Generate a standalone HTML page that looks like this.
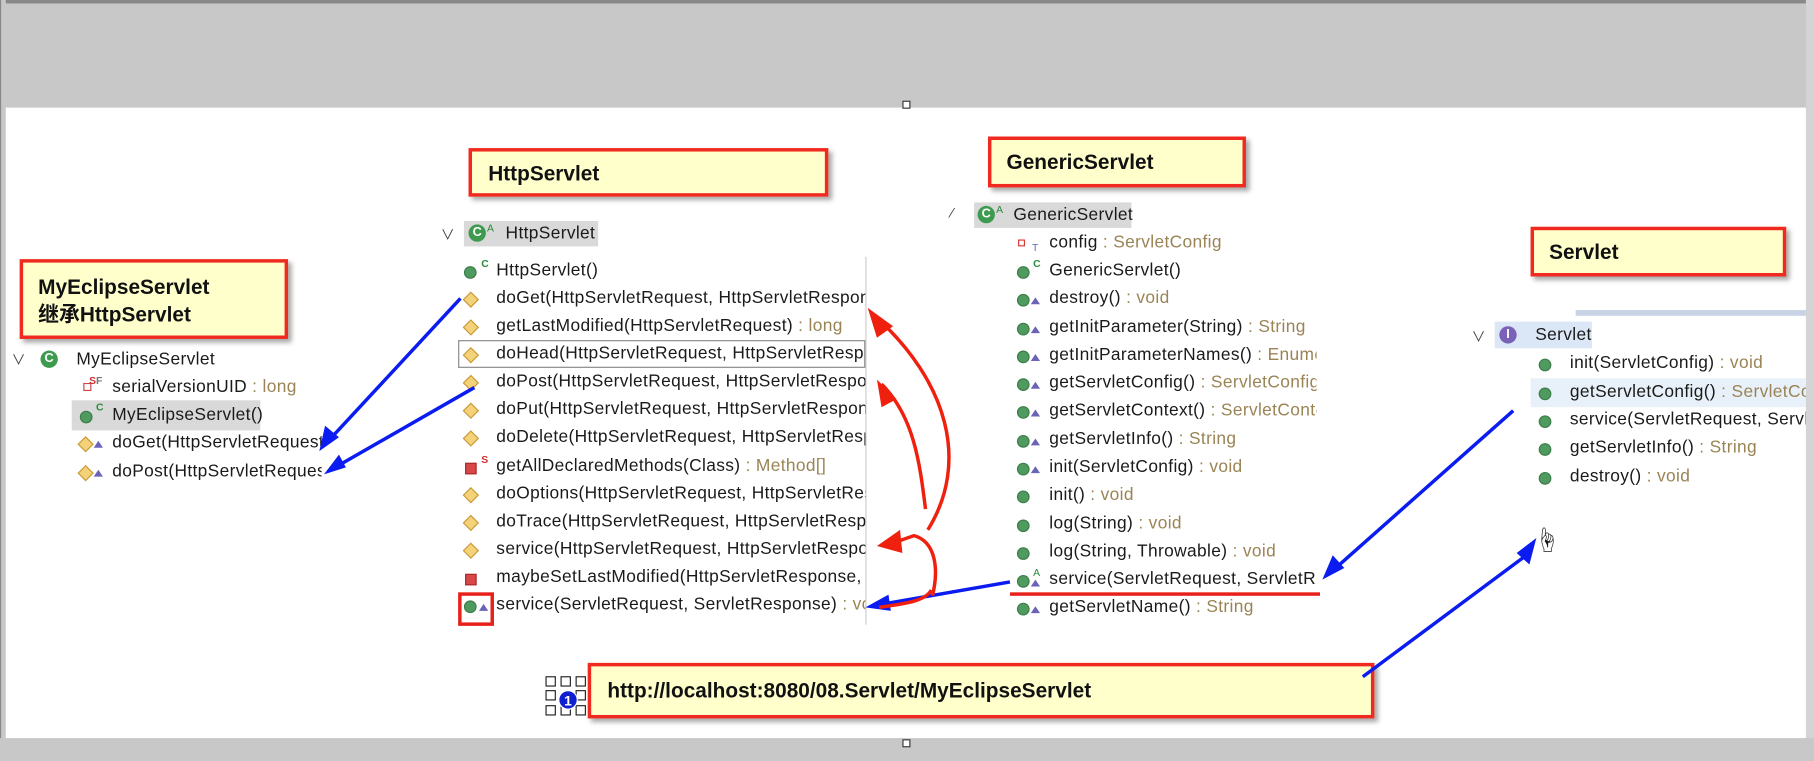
<!DOCTYPE html>
<html><head><meta charset="utf-8"><style>
html,body{margin:0;padding:0;width:1814px;height:761px;overflow:hidden;background:#fff}
#w{position:absolute;left:0;top:0;width:1568px;height:658px;transform:scale(1.15689);transform-origin:0 0;font-family:"Liberation Sans","Noto Sans CJK SC",sans-serif;}
.a{position:absolute}
.t{position:absolute;font-size:15px;letter-spacing:0.3px;line-height:20px;color:#1a1a1a;white-space:nowrap;overflow:hidden}
.s{color:#9a8455}
.g{position:absolute;width:9px;height:9px;border-radius:50%;background:#4f9a5e;border:1px solid #3c7d49}
.d{position:absolute;width:8px;height:8px;background:#f4d27a;border:1px solid #c99a38;transform:rotate(45deg)}
.r{position:absolute;width:8px;height:8px;background:#d94848;border:1px solid #a82a2a}
.tr{position:absolute;width:0;height:0;border-left:4px solid transparent;border-right:4px solid transparent;border-bottom:6px solid #6a64b8}
.sup{position:absolute;font-size:9px;font-weight:bold;line-height:9px}
.cb{position:absolute;background:#ffffcc;border:3px solid #f02a20;box-shadow:3px 3px 4px rgba(0,0,0,.35);font-weight:bold;font-size:18px;color:#111;box-sizing:border-box}
.ci{position:absolute;width:15px;height:15px;border-radius:50%;background:#3d9a4f;color:#fff;font-size:11px;font-weight:bold;text-align:center;line-height:15px}
.hd{position:absolute;background:#d9d9d9}
.chev{position:absolute;font-size:12px;color:#444}
</style></head><body><div id="w">
<div class="a" style="left:0;top:0;width:1568px;height:93px;background:#c8c8c8;border-top:3px solid #888;box-sizing:border-box"></div>
<div class="a" style="left:0;top:0;width:5px;height:658px;background:#c8c8c8;border-left:1px solid #888;box-sizing:border-box"></div>
<div class="a" style="left:1561px;top:0;width:7px;height:658px;background:#d4d4d4"></div>
<div class="a" style="left:0;top:638px;width:1568px;height:20px;background:#c8c8c8"></div>
<div class="a" style="left:780px;top:87px;width:5px;height:5px;border:1px solid #333;background:#fff"></div>
<div class="a" style="left:780px;top:639px;width:5px;height:5px;border:1px solid #333;background:#fff"></div>

<div class="t" style="left:66px;top:276px;color:#999">com.atguigu.servlet</div>
<div class="chev" style="left:10px;top:302px">&#x2228;</div>
<div class="ci" style="left:35px;top:303px">C</div>
<div class="t" style="left:66px;top:301px">MyEclipseServlet</div>
<div class="r" style="left:72px;top:331px;width:5px;height:5px;background:#fff;border-color:#c44"></div><div class="sup" style="left:77px;top:325px;color:#c33">S<span style="color:#777">F</span></div>
<div class="t" style="left:97px;top:325px">serialVersionUID <span class="s">: long</span></div>
<div class="hd" style="left:62px;top:346px;width:163px;height:26px"></div>
<div class="g" style="left:69px;top:355px"></div><div class="sup" style="left:83px;top:348px;color:#2a8a3a">C</div>
<div class="t" style="left:97px;top:349px">MyEclipseServlet()</div>
<div class="d" style="left:69px;top:379px"></div><div class="tr" style="left:81px;top:381px"></div>
<div class="t" style="left:97px;top:373px;width:181px">doGet(HttpServletRequest,</div>
<div class="d" style="left:69px;top:404px"></div><div class="tr" style="left:81px;top:406px"></div>
<div class="t" style="left:97px;top:398px;width:181px">doPost(HttpServletRequest,</div>

<div class="chev" style="left:381px;top:194px">&#x2228;</div>
<div class="hd" style="left:401px;top:191px;width:116px;height:22px"></div>
<div class="ci" style="left:405px;top:194px">C</div><div class="sup" style="left:421px;top:193px;color:#2a8a3a;font-weight:normal">A</div>
<div class="t" style="left:437px;top:192px">HttpServlet</div>
<div class="a" style="left:748px;top:222px;width:1px;height:318px;background:#ccc"></div>
<div class="a" style="left:396px;top:294px;width:352px;height:24px;border:1px solid #888;box-sizing:border-box"></div>
<div class="g" style="left:401px;top:230px"></div><div class="sup" style="left:416px;top:224px;color:#2a8a3a">C</div>
<div class="t" style="left:429px;top:224px;width:319px">HttpServlet()</div>
<div class="d" style="left:402px;top:254px"></div><div class="t" style="left:429px;top:248px;width:319px">doGet(HttpServletRequest, HttpServletResponse)</div>
<div class="d" style="left:402px;top:278px"></div><div class="t" style="left:429px;top:272px;width:319px">getLastModified(HttpServletRequest) <span class="s">: long</span></div>
<div class="d" style="left:402px;top:302px"></div><div class="t" style="left:429px;top:296px;width:318px">doHead(HttpServletRequest, HttpServletResponse)</div>
<div class="d" style="left:402px;top:326px"></div><div class="t" style="left:429px;top:320px;width:319px">doPost(HttpServletRequest, HttpServletResponse)</div>
<div class="d" style="left:402px;top:350px"></div><div class="t" style="left:429px;top:344px;width:319px">doPut(HttpServletRequest, HttpServletResponse)</div>
<div class="d" style="left:402px;top:374px"></div><div class="t" style="left:429px;top:368px;width:319px">doDelete(HttpServletRequest, HttpServletResponse)</div>
<div class="r" style="left:402px;top:400px"></div><div class="sup" style="left:416px;top:393px;color:#c33">S</div><div class="t" style="left:429px;top:393px;width:319px">getAllDeclaredMethods(Class) <span class="s">: Method[]</span></div>
<div class="d" style="left:402px;top:423px"></div><div class="t" style="left:429px;top:417px;width:319px">doOptions(HttpServletRequest, HttpServletResponse)</div>
<div class="d" style="left:402px;top:447px"></div><div class="t" style="left:429px;top:441px;width:319px">doTrace(HttpServletRequest, HttpServletResponse)</div>
<div class="d" style="left:402px;top:471px"></div><div class="t" style="left:429px;top:465px;width:319px">service(HttpServletRequest, HttpServletResponse)</div>
<div class="r" style="left:402px;top:496px"></div><div class="t" style="left:429px;top:489px;width:319px">maybeSetLastModified(HttpServletResponse, long)</div>
<div class="g" style="left:401px;top:519px"></div><div class="tr" style="left:414px;top:522px"></div><div class="t" style="left:429px;top:513px;width:319px">service(ServletRequest, ServletResponse) <span class="s">: void</span></div>
<div class="a" style="left:396px;top:512px;width:31px;height:29px;border:3px solid #e8201a;box-sizing:border-box"></div>

<div class="chev" style="left:822px;top:177px">&#x2215;</div>
<div class="hd" style="left:842px;top:175px;width:136px;height:22px"></div>
<div class="ci" style="left:845px;top:178px">C</div><div class="sup" style="left:861px;top:177px;color:#2a8a3a;font-weight:normal">A</div>
<div class="t" style="left:876px;top:176px">GenericServlet</div>
<div class="a" style="left:880px;top:207px;width:4px;height:4px;border:1px solid #d33"></div><div class="sup" style="left:892px;top:210px;color:#6a64b8;font-weight:normal">T</div>
<div class="t" style="left:907px;top:200px">config <span class="s">: ServletConfig</span></div>
<div class="g" style="left:879px;top:230px"></div><div class="sup" style="left:893px;top:224px;color:#2a8a3a">C</div><div class="t" style="left:907px;top:224px">GenericServlet()</div>
<div class="g" style="left:879px;top:254px"></div><div class="tr" style="left:891px;top:257px"></div><div class="t" style="left:907px;top:248px">destroy() <span class="s">: void</span></div>
<div class="g" style="left:879px;top:279px"></div><div class="tr" style="left:891px;top:282px"></div><div class="t" style="left:907px;top:273px">getInitParameter(String) <span class="s">: String</span></div>
<div class="g" style="left:879px;top:303px"></div><div class="tr" style="left:891px;top:306px"></div><div class="t" style="left:907px;top:297px;width:231px">getInitParameterNames() <span class="s">: Enumeration</span></div>
<div class="g" style="left:879px;top:327px"></div><div class="tr" style="left:891px;top:330px"></div><div class="t" style="left:907px;top:321px;width:231px">getServletConfig() <span class="s">: ServletConfig</span></div>
<div class="g" style="left:879px;top:351px"></div><div class="tr" style="left:891px;top:354px"></div><div class="t" style="left:907px;top:345px;width:231px">getServletContext() <span class="s">: ServletContext</span></div>
<div class="g" style="left:879px;top:376px"></div><div class="tr" style="left:891px;top:379px"></div><div class="t" style="left:907px;top:370px">getServletInfo() <span class="s">: String</span></div>
<div class="g" style="left:879px;top:400px"></div><div class="tr" style="left:891px;top:403px"></div><div class="t" style="left:907px;top:394px">init(ServletConfig) <span class="s">: void</span></div>
<div class="g" style="left:879px;top:424px"></div><div class="t" style="left:907px;top:418px">init() <span class="s">: void</span></div>
<div class="g" style="left:879px;top:449px"></div><div class="t" style="left:907px;top:443px">log(String) <span class="s">: void</span></div>
<div class="g" style="left:879px;top:473px"></div><div class="t" style="left:907px;top:467px">log(String, Throwable) <span class="s">: void</span></div>
<div class="g" style="left:879px;top:497px"></div><div class="sup" style="left:893px;top:491px;color:#2a8a3a;font-weight:normal">A</div><div class="tr" style="left:891px;top:501px"></div><div class="t" style="left:907px;top:491px;width:231px">service(ServletRequest, ServletResponse)</div>
<div class="a" style="left:873px;top:512px;width:268px;height:3px;background:#e8201a"></div>
<div class="g" style="left:879px;top:521px"></div><div class="tr" style="left:891px;top:524px"></div><div class="t" style="left:907px;top:515px">getServletName() <span class="s">: String</span></div>

<div class="a" style="left:1362px;top:268px;width:199px;height:5px;background:#c8d4e6"></div>
<div class="chev" style="left:1272px;top:282px">&#x2228;</div>
<div class="a" style="left:1292px;top:278px;width:84px;height:23px;background:#dbe7f6"></div>
<div class="ci" style="left:1296px;top:282px;background:#7a62b8">I</div>
<div class="t" style="left:1327px;top:280px">Servlet</div>
<div class="g" style="left:1330px;top:310px"></div><div class="t" style="left:1357px;top:304px">init(ServletConfig) <span class="s">: void</span></div>
<div class="a" style="left:1323px;top:327px;width:238px;height:25px;background:#e8f0f9"></div>
<div class="g" style="left:1330px;top:335px"></div><div class="t" style="left:1357px;top:329px;width:204px">getServletConfig() <span class="s">: ServletConfig</span></div>
<div class="g" style="left:1330px;top:359px"></div><div class="t" style="left:1357px;top:353px;width:204px">service(ServletRequest, ServletResponse)</div>
<div class="g" style="left:1330px;top:383px"></div><div class="t" style="left:1357px;top:377px">getServletInfo() <span class="s">: String</span></div>
<div class="g" style="left:1330px;top:408px"></div><div class="t" style="left:1357px;top:402px">destroy() <span class="s">: void</span></div>
<div class="t" style="left:1326px;top:455px;font-size:22px;line-height:26px">&#x261D;</div>

<div class="cb" style="left:405px;top:128px;width:311px;height:42px;padding:9px 0 0 14px">HttpServlet</div>
<div class="cb" style="left:854px;top:118px;width:223px;height:44px;padding:9px 0 0 13px">GenericServlet</div>
<div class="cb" style="left:1323px;top:196px;width:221px;height:43px;padding:9px 0 0 13px">Servlet</div>
<div class="cb" style="left:17px;top:224px;width:232px;height:69px;padding:9px 0 0 13px;line-height:24px">MyEclipseServlet<br>继承HttpServlet</div>
<div class="cb" style="left:508px;top:573px;width:680px;height:48px;padding:11px 0 0 14px">http://localhost:8080/08.Servlet/MyEclipseServlet</div>
<svg class="a" style="left:470px;top:583px" width="44" height="40">
<g fill="#fff" stroke="#222" stroke-width="1">
<rect x="2" y="2" width="8" height="8"/><rect x="15" y="2" width="8" height="8"/><rect x="28" y="2" width="8" height="8"/>
<rect x="2" y="14" width="8" height="8"/><rect x="28" y="14" width="8" height="8"/>
<rect x="2" y="27" width="8" height="8"/><rect x="15" y="27" width="8" height="8"/><rect x="28" y="27" width="8" height="8"/></g>
<circle cx="21" cy="22" r="8" fill="#1020d0" stroke="#fff"/><text x="21" y="27" font-size="12" font-weight="bold" fill="#fff" text-anchor="middle" font-family="Liberation Sans">1</text>
</svg>

<svg class="a" style="left:0;top:0" width="1568" height="658">
<g stroke="#0a1cf0" stroke-width="3" fill="none">
<path d="M398,258 L283,382"/><path d="M410,335 L288,405"/>
<path d="M873,503 L758,523"/><path d="M1308,355 L1150,495"/><path d="M1178,585 L1322,478"/>
</g>
<g fill="#0a1cf0">
<path d="M276,390 L281,368 L293,378 Z"/><path d="M280,410 L293,393 L299,404 Z"/>
<path d="M748,525 L768,514 L770,528 Z"/><path d="M1143,501 L1152,480 L1162,491 Z"/><path d="M1328,465 L1322,488 L1311,478 Z"/>
</g>
<g stroke="#f0200e" stroke-width="3" fill="none">
<path d="M802,458 C838,400 820,330 755,272"/>
<path d="M800,440 C795,400 790,360 762,332"/>
<path d="M806,515 C812,490 808,468 790,463 L770,470"/>
<path d="M805,510 C800,520 780,522 760,525"/>
</g>
<g fill="#f0200e">
<path d="M750,266 L772,282 L758,292 Z"/><path d="M758,328 L775,345 L762,352 Z"/><path d="M758,472 L778,458 L780,478 Z"/>
</g>
</svg>
</div></body></html>
